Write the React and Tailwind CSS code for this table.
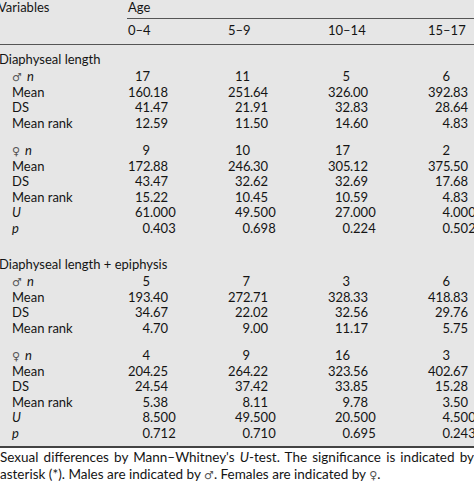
import React from 'react';

const Male = () => (
  <span className="text-[11px] text-[#555] font-['DejaVu_Sans'] not-italic mr-[5px]">♂</span>
);
const Female = () => (
  <span className="text-[11px] text-[#555] font-['DejaVu_Sans'] not-italic mr-[5px]">♀</span>
);

const Num = ({ v }) => {
  const [i, f] = v.split('.');
  return (
    <div className="flex whitespace-nowrap">
      <span className="w-[22px] text-right">{i}</span>
      {f !== undefined && <span>.{f}</span>}
    </div>
  );
};

const Row = ({ label, vals }) => (
  <div className="grid grid-cols-[128px_100px_100px_100px_1fr] h-[15.6px] items-center">
    <div className="pl-[12px] whitespace-nowrap">{label}</div>
    {vals.map((v, k) => <Num key={k} v={v} />)}
  </div>
);

const Block = ({ title, male, female }) => (
  <>
    <div className="h-[15.6px] flex items-center -ml-[1px] whitespace-nowrap">{title}</div>
    <Row label={<><Male /><i>n</i></>} vals={male.n} />
    <Row label="Mean" vals={male.mean} />
    <Row label="DS" vals={male.ds} />
    <Row label="Mean rank" vals={male.rank} />
    <div className="h-[11.5px]" />
    <Row label={<><Female /><i>n</i></>} vals={female.n} />
    <Row label="Mean" vals={female.mean} />
    <Row label="DS" vals={female.ds} />
    <Row label="Mean rank" vals={female.rank} />
    <Row label={<i>U</i>} vals={female.u} />
    <Row label={<i>p</i>} vals={female.p} />
  </>
);

export default function App() {
  return (
    <div className="w-[474px] h-[488px] overflow-hidden bg-white text-[#141414] font-['Lato',sans-serif] text-[13px]">
      <div className="bg-[#e6e6e6] pb-[6px]">
        <div className="grid grid-cols-[128px_1fr] -mt-[2px] h-[15.6px] items-center">
          <div className="-ml-[2px]">Variables</div>
          <div>Age</div>
        </div>
        <div className="ml-[127px] h-px bg-[#555] mt-[4px]" />
        <div className="grid grid-cols-[128px_100px_100px_100px_1fr] h-[25px] items-center">
          <div />
          <div>0–4</div>
          <div>5–9</div>
          <div>10–14</div>
          <div>15–17</div>
        </div>
        <div className="h-px bg-[#555]" />
        <div className="h-[7px]" />
        <Block
          title="Diaphyseal length"
          male={{
            n: ['17', '11', '5', '6'],
            mean: ['160.18', '251.64', '326.00', '392.83'],
            ds: ['41.47', '21.91', '32.83', '28.64'],
            rank: ['12.59', '11.50', '14.60', '4.83'],
          }}
          female={{
            n: ['9', '10', '17', '2'],
            mean: ['172.88', '246.30', '305.12', '375.50'],
            ds: ['43.47', '32.62', '32.69', '17.68'],
            rank: ['15.22', '10.45', '10.59', '4.83'],
            u: ['61.000', '49.500', '27.000', '4.000'],
            p: ['0.403', '0.698', '0.224', '0.502'],
          }}
        />
        <div className="h-[22px]" />
        <Block
          title="Diaphyseal length + epiphysis"
          male={{
            n: ['5', '7', '3', '6'],
            mean: ['193.40', '272.71', '328.33', '418.83'],
            ds: ['34.67', '22.02', '32.56', '29.76'],
            rank: ['4.70', '9.00', '11.17', '5.75'],
          }}
          female={{
            n: ['4', '9', '16', '3'],
            mean: ['204.25', '264.22', '323.56', '402.67'],
            ds: ['24.54', '37.42', '33.85', '15.28'],
            rank: ['5.38', '8.11', '9.78', '3.50'],
            u: ['8.500', '49.500', '20.500', '4.500'],
            p: ['0.712', '0.710', '0.695', '0.243'],
          }}
        />
      </div>
      <div className="h-[2px] bg-[#444]" />
      <p className="text-[13.5px] leading-[17px] text-justify pt-[1px]">
        Sexual differences by Mann–Whitney's <i>U</i>-test. The significance is indicated by asterisk (*). Males are indicated by <span className="text-[11px] text-[#555] font-['DejaVu_Sans']">♂</span>. Females are indicated by <span className="text-[11px] text-[#555] font-['DejaVu_Sans']">♀</span>.
      </p>
    </div>
  );
}
